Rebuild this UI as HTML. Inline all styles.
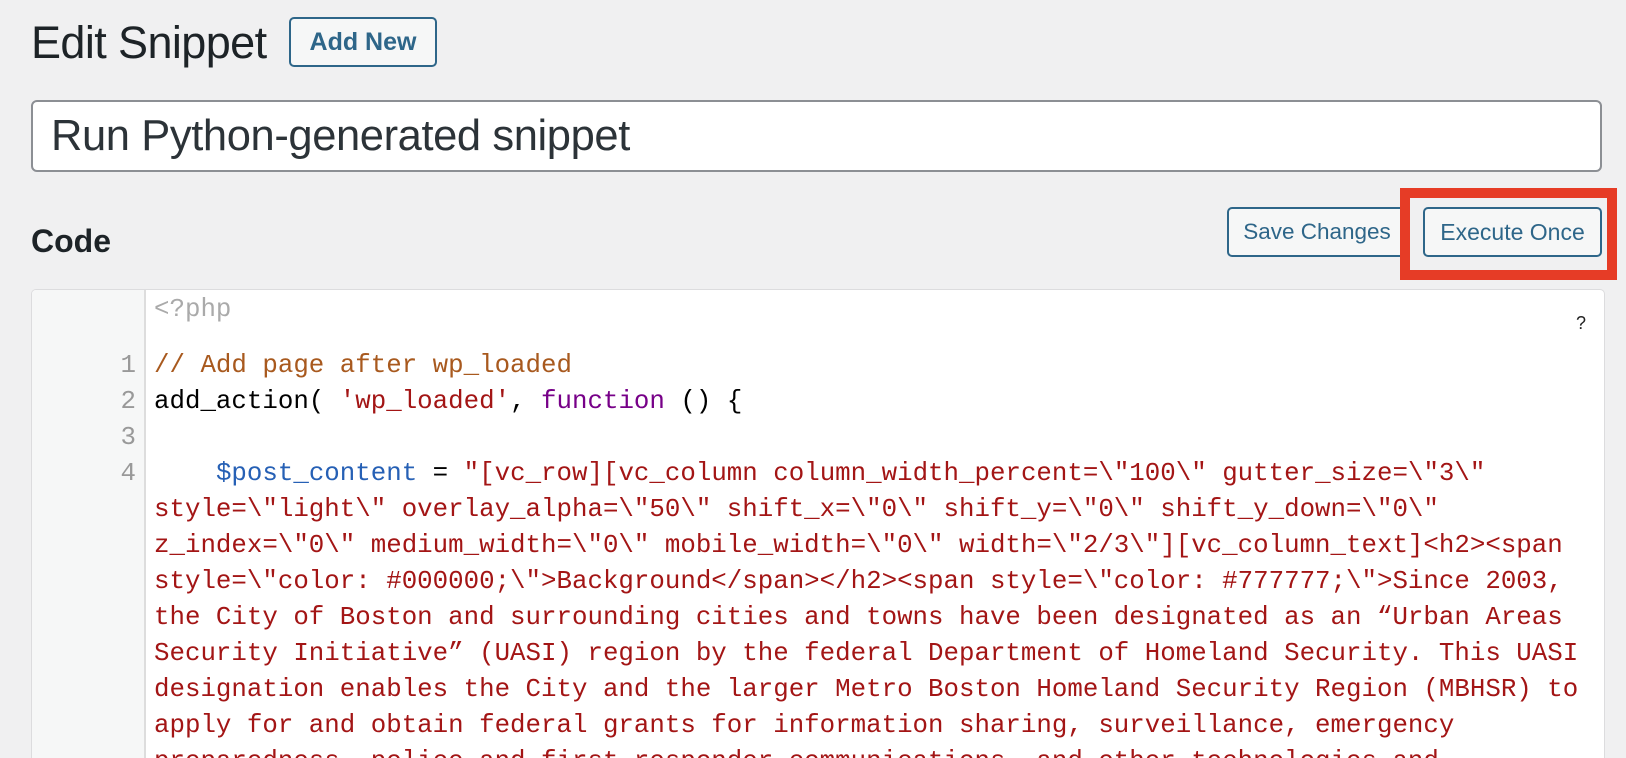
<!DOCTYPE html>
<html style="overflow:hidden;height:758px"><head><meta charset="utf-8"><style>
html,body{overflow:hidden}
body{margin:0;width:1626px;height:758px;background:#f0f0f1;position:relative;font-family:"Liberation Sans",sans-serif;color:#1d2327}
.abs{position:absolute}
h1{position:absolute;left:31px;top:17px;margin:0;font-weight:400;font-size:45px;line-height:52px;color:#1d2327;letter-spacing:-0.6px}
.btn{position:absolute;border:2px solid #2e6689;border-radius:5px;background:#f6f7f7;color:#2e6689;box-sizing:border-box;display:flex;align-items:center;justify-content:center}
.inp{position:absolute;left:31px;top:100px;width:1571px;height:72px;box-sizing:border-box;border:2px solid #8c8f94;border-radius:6px;background:#fff;font-size:43.5px;padding-left:18px;line-height:68px;color:#2c3338;letter-spacing:-0.4px}
.code{font-family:"Liberation Mono",monospace;font-size:25.8px;white-space:pre;position:absolute;left:154px;line-height:36px;color:#a31515}
.ln{font-family:"Liberation Mono",monospace;font-size:25.8px;position:absolute;width:60px;left:76px;text-align:right;line-height:36px;color:#999}
#clip{position:absolute;left:0;top:0;width:1626px;height:758px;overflow:hidden}
</style></head><body>
<div id="clip">
<h1>Edit Snippet</h1>
<div class="btn" style="left:289px;top:17px;width:148px;height:50px;font-size:25px;font-weight:600">Add New</div>
<div class="inp">Run Python-generated snippet</div>
<div class="abs" style="left:31px;top:221px;font-size:32px;font-weight:700;line-height:40px">Code</div>
<div class="btn" style="left:1227px;top:207px;width:180px;height:50px;font-size:22.5px">Save Changes</div>
<div class="abs" style="left:1400px;top:188px;width:217px;height:92px;box-sizing:border-box;border:10px solid #e63c26"></div>
<div class="btn" style="left:1423px;top:207px;width:179px;height:50px;font-size:23px">Execute Once</div>
<div class="abs" style="left:31px;top:289px;width:1574px;height:520px;background:#fff;border:1px solid #dcdcde;border-radius:5px;box-sizing:border-box;overflow:hidden">
  <div class="abs" style="left:0;top:0;width:112px;height:100%;background:#f6f7f7;border-right:2px solid #ddd"></div>
</div>
<div class="abs" style="left:1576px;top:313px;font-size:18px;color:#222">?</div>
<div class="code" style="top:292px;color:#aaa">&lt;?php</div>
<div class="ln" style="top:348px">1</div>
<div class="ln" style="top:384px">2</div>
<div class="ln" style="top:420px">3</div>
<div class="ln" style="top:456px">4</div>
<div class="code" style="top:348px;color:#a8591e">// Add page after wp_loaded</div>
<div class="code" style="top:384px;color:#000">add_action( <span style="color:#a31515">'wp_loaded'</span>, <span style="color:#770088">function</span> () {</div>
<div class="code" style="top:456px">    <span style="color:#2660b5">$post_content</span><span style="color:#000"> = </span>"[vc_row][vc_column column_width_percent=\"100\" gutter_size=\"3\"</div>
<div class="code" style="top:492px">style=\"light\" overlay_alpha=\"50\" shift_x=\"0\" shift_y=\"0\" shift_y_down=\"0\"</div>
<div class="code" style="top:528px">z_index=\"0\" medium_width=\"0\" mobile_width=\"0\" width=\"2/3\"][vc_column_text]&lt;h2&gt;&lt;span</div>
<div class="code" style="top:564px">style=\"color: #000000;\"&gt;Background&lt;/span&gt;&lt;/h2&gt;&lt;span style=\"color: #777777;\"&gt;Since 2003,</div>
<div class="code" style="top:600px">the City of Boston and surrounding cities and towns have been designated as an “Urban Areas</div>
<div class="code" style="top:636px">Security Initiative” (UASI) region by the federal Department of Homeland Security. This UASI</div>
<div class="code" style="top:672px">designation enables the City and the larger Metro Boston Homeland Security Region (MBHSR) to</div>
<div class="code" style="top:708px">apply for and obtain federal grants for information sharing, surveillance, emergency</div>
<div class="code" style="top:744px">preparedness, police and first responder communications, and other technologies and</div>
</div>
</body></html>
